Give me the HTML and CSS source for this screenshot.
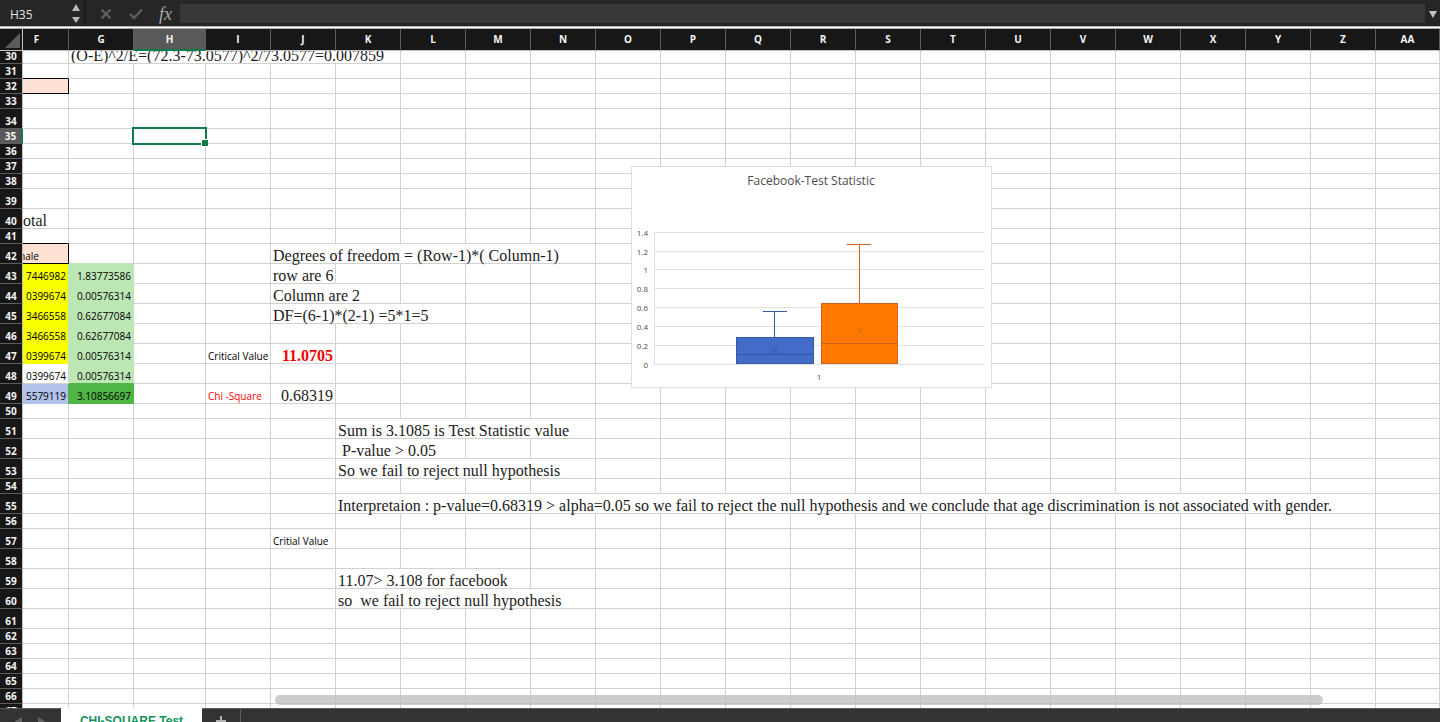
FILE: index.html
```html
<!DOCTYPE html>
<html lang="en">
<head>
<meta charset="utf-8">
<title>CHI-SQUARE Test</title>
<link rel="stylesheet" href="styles.css">
</head>
<body>
<header class="formula-bar">
  <div class="name-box">
    <input class="name-input" type="text" value="H35" aria-label="Name box">
    <button class="name-toggle" type="button" aria-label="Choose a name">
      <svg width="8" height="20" viewBox="0 0 8 20"><path d="M4 0 8 7H0zM0 13h8l-4 6z" fill="#b8b8b8"/></svg>
    </button>
  </div>
  <div class="formula-tools">
    <button class="tool" type="button" aria-label="Cancel"><svg width="12" height="12" viewBox="0 0 12 12"><path d="M1.500 1.500l9 9M10.500 1.500l-9 9" stroke="#5f5f5f" stroke-width="2.400" fill="none"/></svg></button>
    <button class="tool" type="button" aria-label="Enter"><svg width="14" height="12" viewBox="0 0 14 12"><path d="M1 6l4 4L13 1.500" stroke="#5f5f5f" stroke-width="2.400" fill="none"/></svg></button>
    <button class="tool fx" type="button" aria-label="Insert function">fx</button>
  </div>
  <input class="formula-input" type="text" aria-label="Formula">
  <button class="expand" type="button" aria-label="Expand formula bar"><svg width="8" height="7" viewBox="0 0 8 7"><path d="M0 0h8L4 7z" fill="#c4c4c4"/></svg></button>
</header>

<main class="sheet">
  <table class="grid">
    <colgroup id="cols"></colgroup>
    <thead><tr id="head"></tr></thead>
    <tbody id="rows"></tbody>
  </table>

  <figure class="chart">
    <svg width="361" height="222" viewBox="0 0 361 222" role="img" aria-label="Facebook-Test Statistic box plot">
      <path class="gridline" d="M23 66.500h331M23 85.500h331M23 103.500h331M23 122.500h331M23 141.500h331M23 160.500h331M23 179.500h331M23 198.500h331M23.500 66v132"/>
      <text class="chart-title" x="180" y="19">Facebook-Test Statistic</text>
      <g class="axis-y">
        <text x="17" y="70">1.4</text><text x="17" y="89">1.2</text><text x="17" y="107">1</text>
        <text x="17" y="126">0.8</text><text x="17" y="145">0.6</text><text x="17" y="164">0.4</text>
        <text x="17" y="183">0.2</text><text x="17" y="202">0</text>
      </g>
      <text class="axis-x" x="188" y="214">1</text>
      <g class="series blue-box">
        <rect x="105.500" y="171.500" width="77" height="26"/>
        <path d="M105 188.500h78M132 145.500h24M143.500 145v26M140.500 180.500l6 6M146.500 180.500l-6 6"/>
      </g>
      <g class="series orange-box">
        <rect x="190.500" y="137.500" width="76" height="60"/>
        <path d="M190 177.500h77M216 78.500h24M228.500 78v59M225.500 161.500l6 6M231.500 161.500l-6 6"/>
      </g>
    </svg>
  </figure>
  <div class="scroll-thumb"></div>
</main>

<footer class="tab-bar">
  <div class="tab-nav">
    <button class="tab-arrow" type="button" aria-label="Previous sheet"><svg width="8" height="10" viewBox="0 0 8 10"><path d="M8 0v10L0 5z" fill="#636363"/></svg></button>
    <button class="tab-arrow" type="button" aria-label="Next sheet"><svg width="8" height="10" viewBox="0 0 8 10"><path d="M0 0v10l8-5z" fill="#636363"/></svg></button>
  </div>
  <button class="tab" type="button">CHI-SQUARE Test</button>
  <button class="add-tab" type="button" aria-label="Add sheet"><svg width="10" height="10" viewBox="0 0 10 10"><path d="M5 0v10M0 5h10" stroke="#b4b4b4" stroke-width="2"/></svg></button>
</footer>
<script src="app.js"></script>
</body>
</html>
```

FILE: styles.css
```css
* { box-sizing: border-box; }

body {
  margin: 0;
  height: 100vh;
  display: flex;
  flex-direction: column;
  overflow: hidden;
  background: #fff;
  color: #1c1c1c;
  font-family: "Open Sans", Lato, sans-serif;
  font-size: 10px;
}

button, input {
  margin: 0;
  padding: 0;
  border: 0;
  background: none;
  font: inherit;
  color: inherit;
}

/* Formula bar */
.formula-bar {
  flex: none;
  display: flex;
  align-items: stretch;
  height: 29px;
  padding-bottom: 3px;
  background: linear-gradient(#262626 26px, #b4b4b4 26px, #b4b4b4 27px, #fff 27px, #fff 28px, #a8a8a8 28px);
}
.name-box {
  display: flex;
  align-items: center;
  width: 86px;
  padding: 2px 4px 0 10px;
  border-right: 2px solid #1c1c1c;
}
.name-input {
  flex: 1;
  min-width: 0;
  font-size: 12px;
  font-weight: 500;
  color: #e4e4e4;
}
.name-toggle { display: flex; }
.formula-tools {
  display: flex;
  align-items: center;
  justify-content: space-between;
  width: 94px;
  padding: 2px 8px 0 14px;
}
.tool { display: flex; }
.fx {
  font: italic 18px/18px "Liberation Serif", serif;
  color: #a8a8a8;
}
.formula-input {
  flex: 1;
  min-width: 0;
  margin: 4px 0 3px;
  background: #383838;
}
.expand {
  display: flex;
  align-items: center;
  justify-content: center;
  width: 15px;
  padding-top: 2px;
}

/* Grid */
.sheet {
  flex: 1;
  min-height: 0;
  position: relative;
  overflow: hidden;
}
.grid {
  width: 100%;
  table-layout: fixed;
  border-collapse: separate;
  border-spacing: 0;
}
.w-head { width: 23px; }
.w-first { width: 46px; }
.w-std { width: 65px; }
.w-wide { width: 72px; }

.grid th {
  padding: 0;
  background: #171717;
  color: #f4f4f4;
  font-weight: 700;
  line-height: 14px;
}
.grid thead th {
  height: 22px;
  padding-bottom: 1px;
  border-right: 1px solid #5c5c5c;
  border-bottom: 1px solid #c4c4c4;
  vertical-align: middle;
}
.grid thead .corner { border-right-color: #c4c4c4; }
.corner svg { display: block; margin: 3px 0 0 5px; }
.grid thead .clipped { padding-right: 18px; }
.grid thead .selected {
  padding-bottom: 0;
  background: #595959;
  border-bottom: 2px solid #107c4a;
}
.grid tbody th {
  border-right: 1px solid #c4c4c4;
  border-bottom: 1px solid #5c5c5c;
  vertical-align: bottom;
}
.grid tbody .selected {
  background: #595959;
  border-right: 2px solid #107c4a;
}
.grid td {
  position: relative;
  padding: 0 2px;
  border-right: 1px solid #d2d2d2;
  border-bottom: 1px solid #d2d2d2;
  vertical-align: bottom;
  color: #000;
  font-weight: 500;
  line-height: 14px;
  white-space: pre;
}
.h-short { height: 15px; }
.h-tall { height: 20px; }
.h-cut { height: 13px; }

.clip {
  display: flex;
  align-items: flex-end;
  justify-content: flex-end;
  height: 12px;
  overflow: hidden;
}
.clip.center { justify-content: center; }
.h-cut td .clip { justify-content: flex-start; }
.h-tall .clip { height: 14px; }
.grid td.cut { padding-left: 0; }
.cut .word { width: 16px; }

.grid td.serif {
  color: #1c1c1c;
  font-family: "Liberation Serif", serif;
  font-size: 16px;
  font-weight: 400;
}
.grid td.otal { padding: 0; }
.grid td.num { text-align: right; }
.grid td.bold { font-weight: 700; }
.grid td.red { color: #f80000; }

.grid td.peach { background: #ffe2d3; border-color: #000; }
.grid td.over-peach { border-bottom-color: #000; }
.grid td.yellow { background: #faff00; border-color: #bce6b4 #bce6b4 #faff00; }
.grid td.mint { background: #bce6b4; border-color: #bce6b4; }
.grid td.over-mint { border-bottom-color: #bce6b4; }
.grid td.green { background: #4fb545; border-color: #4fb545; }
.grid td.over-green { border-bottom-color: #4fb545; }
.grid td.blue { background: #b1c3ea; border-color: #4fb545 #4fb545 #b1c3ea; }

.cursor {
  position: absolute;
  inset: -2px;
  z-index: 1;
  border: 2px solid #107c4a;
}
.cursor::after {
  content: "";
  position: absolute;
  right: -3px;
  bottom: -3px;
  width: 6px;
  height: 6px;
  background: #107c4a;
  border: solid #fff;
  border-width: 1px 0 0 1px;
}

/* Chart floating over the cells */
.chart {
  position: absolute;
  left: 631px;
  top: 137px;
  z-index: 2;
  margin: 0;
  background: #fff;
  outline: 1px solid #e0e0e0;
  outline-offset: -1px;
}
.chart svg { display: block; }
.gridline { stroke: #e0e0e0; fill: none; }
.chart text { fill: #4c4c4c; font-weight: 500; }
.chart-title { font-size: 12px; text-anchor: middle; }
.axis-y { font-size: 8px; text-anchor: end; }
.axis-x { font-size: 8px; text-anchor: middle; }
.series path { fill: none; }
.blue-box { stroke: #3659a6; }
.blue-box rect { fill: #436bc8; }
.orange-box { stroke: #d0641c; }
.orange-box rect { fill: #ff7900; }

.scroll-thumb {
  position: absolute;
  left: 275px;
  right: 117px;
  bottom: 3px;
  z-index: 3;
  height: 10px;
  border-radius: 5px;
  background: rgba(184, 184, 184, 0.7);
}

/* Sheet tabs */
.tab-bar {
  flex: none;
  display: flex;
  align-items: flex-start;
  height: 14px;
  overflow: hidden;
  background: #333;
}
.tab-nav {
  display: flex;
  gap: 16px;
  width: 61px;
  height: 26px;
  padding: 8px 14px 0;
  border-top: 1px solid #5c5c5c;
}
.tab-arrow { display: flex; align-items: flex-start; }
.tab {
  width: 141px;
  height: 26px;
  background: #fff;
  color: #12935c;
  font: bold 12px/20px "Liberation Sans", sans-serif;
}
.add-tab {
  display: flex;
  justify-content: center;
  width: 39px;
  height: 26px;
  padding-top: 7px;
  border-top: 1px solid #5c5c5c;
  border-right: 1px solid #5c5c5c;
}
.tab-bar::after {
  content: "";
  flex: 1;
  border-top: 1px solid #5c5c5c;
}
```

FILE: app.js
```js
const columns = ['F', 'G', 'H', 'I', 'J', 'K', 'L', 'M', 'N', 'O', 'P', 'Q', 'R', 'S', 'T', 'U', 'V', 'W', 'X', 'Y', 'Z', 'AA'];
const tallRows = new Set([34, 39, 40, 42, 43, 44, 45, 46, 47, 48, 49, 51, 52, 53, 55, 57, 58, 59, 60, 61]);

const cells = {
  G30: { text: '(O-E)^2/E=(72.3-73.0577)^2/73.0577=0.007859', cls: 'serif', span: 5, clip: 'line' },
  F31: { cls: 'over-peach' },
  F32: { cls: 'peach' },
  H35: { cursor: true },
  F40: { text: 'otal', cls: 'serif otal' },
  F41: { cls: 'over-peach' },
  F42: { text: 'male', cls: 'peach cut', clip: 'word' },
  G42: { cls: 'over-mint' },
  J42: { text: 'Degrees of freedom = (Row-1)*( Column-1)', cls: 'serif', span: 5 },
  J43: { text: 'row are 6', cls: 'serif' },
  J44: { text: 'Column are 2', cls: 'serif', span: 2 },
  J45: { text: 'DF=(6-1)*(2-1) =5*1=5', cls: 'serif', span: 3 },
  F43: { text: '7446982', cls: 'yellow cut', clip: 'line' },
  F44: { text: '0399674', cls: 'yellow cut', clip: 'line' },
  F45: { text: '3466558', cls: 'yellow cut', clip: 'line' },
  F46: { text: '3466558', cls: 'yellow cut', clip: 'line' },
  F47: { text: '0399674', cls: 'yellow cut', clip: 'line' },
  F48: { text: '0399674', cls: 'cut', clip: 'line' },
  F49: { text: '5579119', cls: 'blue cut', clip: 'line' },
  G43: { text: '1.83773586', cls: 'mint num' },
  G44: { text: '0.00576314', cls: 'mint num' },
  G45: { text: '0.62677084', cls: 'mint num' },
  G46: { text: '0.62677084', cls: 'mint num' },
  G47: { text: '0.00576314', cls: 'mint num' },
  G48: { text: '0.00576314', cls: 'mint num over-green' },
  G49: { text: '3.10856697', cls: 'green num' },
  I47: { text: 'Critical Value' },
  J47: { text: '11.0705', cls: 'serif num bold red' },
  I49: { text: 'Chi -Square', cls: 'red' },
  J49: { text: '0.68319', cls: 'serif num' },
  K51: { text: 'Sum is 3.1085 is Test Statistic value', cls: 'serif', span: 4 },
  K52: { text: ' P-value > 0.05', cls: 'serif', span: 2 },
  K53: { text: 'So we fail to reject null hypothesis', cls: 'serif', span: 4 },
  K55: { text: 'Interpretaion : p-value=0.68319 > alpha=0.05 so we fail to reject the null hypothesis and we conclude that age discrimination is not associated with gender.', cls: 'serif', span: 16 },
  J57: { text: 'Critial Value' },
  K59: { text: '11.07> 3.108 for facebook', cls: 'serif', span: 3 },
  K60: { text: 'so  we fail to reject null hypothesis', cls: 'serif', span: 4 }
};

const make = (tag, cls, text) => {
  const el = document.createElement(tag);
  if (cls) el.className = cls;
  if (text) el.textContent = text;
  return el;
};

const cols = document.getElementById('cols');
cols.append(make('col', 'w-head'));
columns.forEach((name, i) => {
  const last = i === columns.length - 1;
  cols.append(make('col', last ? '' : { F: 'w-first', H: 'w-wide' }[name] || 'w-std'));
});

const head = document.getElementById('head');
const corner = make('th', 'corner');
corner.innerHTML = '<svg width="15" height="15" viewBox="0 0 15 15"><path d="M15 0v15H0z" fill="#5c5c5c"/></svg>';
head.append(corner);
columns.forEach(name => head.append(make('th', { F: 'clipped', H: 'selected' }[name], name)));

const body = document.getElementById('rows');
for (let r = 30; r <= 67; r++) {
  const row = make('tr', r === 30 ? 'h-cut' : tallRows.has(r) ? 'h-tall' : 'h-short');
  const label = make('th', r === 35 ? 'selected' : '');
  if (r === 30) label.append(make('div', 'clip center', '30'));
  else label.textContent = r;
  row.append(label);
  for (let c = 0; c < columns.length; c++) {
    const data = cells[columns[c] + r] || {};
    const td = make('td', data.cls);
    if (data.clip) td.append(make('div', 'clip ' + data.clip, data.text));
    else if (data.text) td.textContent = data.text;
    if (data.cursor) td.append(make('div', 'cursor'));
    if (data.span) {
      td.colSpan = data.span;
      c += data.span - 1;
    }
    row.append(td);
  }
  body.append(row);
}
```
